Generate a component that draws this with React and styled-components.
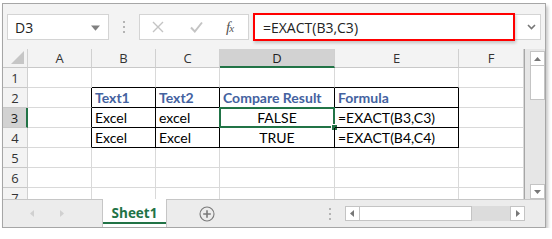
import React from "react";
import styled, { createGlobalStyle, css } from "styled-components";

const Global = createGlobalStyle`
  html, body { margin: 0; padding: 0; background: #fff; }
  body { font-family: "Open Sans", "Noto Sans", sans-serif; }
`;

const GREEN = "#217346";
const COLS = [
  { name: "", w: 25 },
  { name: "A", w: 64 },
  { name: "B", w: 64 },
  { name: "C", w: 64 },
  { name: "D", w: 115 },
  { name: "E", w: 124 },
  { name: "F", w: 65 },
];

const data = {
  2: { B: ["Text1", "head"], C: ["Text2", "head"], D: ["Compare Result", "head"], E: ["Formula", "head"] },
  3: { B: ["Excel"], C: ["excel"], D: ["FALSE", "center"], E: ["=EXACT(B3,C3)"] },
  4: { B: ["Excel"], C: ["Excel"], D: ["TRUE", "center"], E: ["=EXACT(B4,C4)"] },
};

const inBox = (r, c) => r >= 2 && r <= 4 && c >= 2 && c <= 5;

const Window = styled.div`
  margin: 3px 0 0 2px;
  width: 542px;
  height: 223px;
  border: 1px solid #a6a6a6;
  background: #f3f3f3;
  box-shadow: 2px 3px 3px rgba(0, 0, 0, 0.22);
  display: flex;
  flex-direction: column;
  overflow: hidden;
`;

const Toolbar = styled.div`
  height: 45px;
  display: flex;
  align-items: center;
  padding: 1px 4px 0 4px;
  box-sizing: border-box;
`;

const Field = styled.div`
  height: 26px;
  box-sizing: border-box;
  border: 1px solid #d4d4d4;
  background: #fff;
  display: flex;
  align-items: center;
  position: relative;
`;

const NameBox = styled(Field)`
  width: 102px;
  padding: 0 8px 0 7px;
  justify-content: space-between;
  font-size: 14px;
  color: #222;
`;

const FxBox = styled(Field)`
  width: 110px;
  margin-left: 14px;
  padding: 0 0 0 12px;
`;

const FormulaBox = styled(Field)`
  flex: 1;
  margin-left: 4px;
  padding-left: 9px;
  font-size: 14px;
  color: #222;
`;

const Highlight = styled.div`
  position: absolute;
  left: -1px;
  top: -2px;
  width: 262px;
  height: 28px;
  box-sizing: border-box;
  border: 2px solid #ff0000;
  box-shadow: 1px 2px 3px rgba(0, 0, 0, 0.2);
  pointer-events: none;
`;

const Dots = styled.div`
  width: 2px;
  display: flex;
  flex-direction: column;
  gap: 3px;
  margin: ${(p) => p.$m || "0 12px"};
  span {
    width: 2px;
    height: 2px;
    background: #b4b4b4;
  }
`;

const IconSlot = styled.div`
  width: ${(p) => p.$w || 38}px;
  display: flex;
  align-items: center;
  justify-content: ${(p) => p.$j || "flex-start"};
`;

const Fx = styled.span`
  font-family: "Liberation Serif", serif;
  font-style: italic;
  font-size: 15px;
  color: #555;
  letter-spacing: -1px;
  small { font-size: 11px; }
`;

const Body = styled.div`
  height: 150px;
  display: flex;
  background: #fff;
`;

const Sheet = styled.div`
  width: 521px;
  overflow: hidden;
  border-right: 1px solid #a6a6a6;
  display: grid;
  grid-template-columns: ${COLS.map((c) => c.w + "px").join(" ")};
  grid-template-rows: 19px repeat(7, 20px);
  font-family: "Lato", sans-serif;
  font-size: 14px;
`;

const Header = styled.div`
  box-sizing: border-box;
  background: ${(p) => (p.$sel ? "#d2d2d2" : "#f3f3f3")};
  border-right: 1px solid #d0d0d0;
  border-bottom: 1px solid #c8c8c8;
  font-family: "Open Sans", sans-serif;
  font-size: 13px;
  color: #333;
  display: flex;
  align-items: center;
  justify-content: center;
  position: relative;
  ${(p) =>
    p.$sel &&
    p.$col &&
    css`
      border-bottom: 2px solid ${GREEN};
      color: #222;
    `}
  ${(p) =>
    p.$sel &&
    p.$row &&
    css`
      border-right: 2px solid ${GREEN};
      color: #222;
    `}
`;

const Corner = styled(Header)`
  &::after {
    content: "";
    position: absolute;
    right: 3px;
    bottom: 3px;
    border-style: solid;
    border-width: 0 0 13px 13px;
    border-color: transparent transparent #c6c6c6 transparent;
  }
`;

const Cell = styled.div`
  box-sizing: border-box;
  border-right: 1px solid ${(p) => (p.$br ? "#000" : "#d9d9d9")};
  border-bottom: 1px solid ${(p) => (p.$bb ? "#000" : "#d9d9d9")};
  padding: 0 3px;
  display: flex;
  align-items: center;
  justify-content: ${(p) => (p.$kind === "center" ? "center" : "flex-start")};
  white-space: nowrap;
  color: ${(p) => (p.$kind === "head" ? "#44629f" : "#000")};
  font-weight: ${(p) => (p.$kind === "head" ? 700 : 400)};
  position: relative;
`;

const Selection = styled.div`
  position: absolute;
  left: -1px;
  top: -1px;
  right: -1px;
  bottom: -1px;
  border: 2px solid ${GREEN};
  &::after {
    content: "";
    position: absolute;
    right: -5px;
    bottom: -5px;
    width: 5px;
    height: 5px;
    background: ${GREEN};
    border: 1px solid #fff;
  }
`;

const VScroll = styled.div`
  flex: 1;
  background: #e6e6e6;
  display: flex;
  flex-direction: column;
  align-items: center;
  padding: 2px 0 0 4px;
  box-sizing: border-box;
`;

const ArrowBtn = styled.div`
  width: 15px;
  height: 15px;
  box-sizing: border-box;
  border: 1px solid #c4c4c4;
  background: #fff;
  display: flex;
  align-items: center;
  justify-content: center;
`;

const VThumb = styled.div`
  width: 15px;
  height: 34px;
  box-sizing: border-box;
  border: 1px solid #c4c4c4;
  border-top: none;
  background: #fff;
`;

const Spacer = styled.div`
  flex: 1;
`;

const TabBar = styled.div`
  flex: 1;
  display: flex;
  align-items: stretch;
  border-top: 1px solid #c6c6c6;
  background: #ececec;
`;

const NavArrows = styled.div`
  width: 99px;
  display: flex;
  align-items: center;
  padding-left: 26px;
  gap: 22px;
  box-sizing: border-box;
`;

const Tab = styled.div`
  width: 65px;
  margin-top: -1px;
  box-sizing: border-box;
  background: #fff;
  border-left: 1px solid #c6c6c6;
  border-right: 1px solid #c6c6c6;
  display: flex;
  align-items: center;
  justify-content: center;
  font-family: "Open Sans", sans-serif;
  font-weight: 700;
  font-size: 13.5px;
  color: ${GREEN};
  position: relative;
  &::after {
    content: "";
    position: absolute;
    left: 0;
    right: 0;
    bottom: 3px;
    height: 2px;
    background: ${GREEN};
  }
`;

const AddSheet = styled.div`
  width: 80px;
  display: flex;
  align-items: center;
  justify-content: center;
  padding-top: 1px;
`;

const HScroll = styled.div`
  display: flex;
  align-items: center;
  margin-left: auto;
  margin-right: 20px;
`;

const HTrack = styled.div`
  display: flex;
  width: 150px;
  height: 15px;
  background: #dcdcdc;
  box-sizing: border-box;
`;

const HThumb = styled.div`
  width: 112px;
  box-sizing: border-box;
  border: 1px solid #c4c4c4;
  border-left: none;
  background: #fff;
`;

const Tri = ({ dir, color = "#777", size = 7 }) => {
  const pts = {
    up: "0,6 3.5,2 7,6",
    down: "0,2 3.5,6 7,2",
    left: "5,0 1,3.5 5,7",
    right: "2,0 6,3.5 2,7",
  }[dir];
  return (
    <svg width={size} height={size} viewBox="0 0 7 7">
      <polygon points={pts} fill={color} />
    </svg>
  );
};

function DotCol({ m }) {
  return (
    <Dots $m={m}>
      <span />
      <span />
      <span />
    </Dots>
  );
}

export default function App() {
  const cells = [<Corner key="corner" />];
  COLS.slice(1).forEach((c) =>
    cells.push(
      <Header key={"h" + c.name} $sel={c.name === "D"} $col>
        {c.name}
      </Header>
    )
  );
  for (let r = 1; r <= 7; r++) {
    cells.push(
      <Header key={"r" + r} $sel={r === 3} $row>
        {r}
      </Header>
    );
    for (let c = 1; c < COLS.length; c++) {
      const name = COLS[c].name;
      const v = data[r] && data[r][name];
      const br = inBox(r, c) || inBox(r, c + 1);
      const bb = inBox(r, c) || inBox(r + 1, c);
      cells.push(
        <Cell key={r + name} $br={br} $bb={bb} $kind={v && v[1]}>
          {v && v[0]}
          {r === 3 && name === "D" && <Selection />}
        </Cell>
      );
    }
  }

  return (
    <>
      <Global />
      <Window>
        <Toolbar>
          <NameBox>
            D3
            <Tri dir="down" color="#808080" size={9} />
          </NameBox>
          <DotCol m="0 0 0 14px" />
          <FxBox>
            <IconSlot $w={38}>
              <svg width="12" height="12" viewBox="0 0 12 12">
                <path d="M1 1 L11 11 M11 1 L1 11" stroke="#c4c4c4" strokeWidth="1.4" fill="none" />
              </svg>
            </IconSlot>
            <IconSlot $w={36}>
              <svg width="13" height="12" viewBox="0 0 13 12">
                <path d="M1 6.5 L4.8 10.5 L12 1.5" stroke="#c4c4c4" strokeWidth="2" fill="none" />
              </svg>
            </IconSlot>
            <Fx>
              f<small>x</small>
            </Fx>
          </FxBox>
          <FormulaBox>
            =EXACT(B3,C3)
            <Highlight />
            <Spacer />
            <IconSlot $w={18} $j="center">
              <svg width="9" height="6" viewBox="0 0 9 6">
                <path d="M1 1 L4.5 4.5 L8 1" stroke="#777" strokeWidth="1.6" fill="none" />
              </svg>
            </IconSlot>
          </FormulaBox>
        </Toolbar>
        <Body>
          <Sheet>{cells}</Sheet>
          <VScroll>
            <ArrowBtn>
              <Tri dir="up" />
            </ArrowBtn>
            <VThumb />
            <Spacer />
            <ArrowBtn>
              <Tri dir="down" />
            </ArrowBtn>
          </VScroll>
        </Body>
        <TabBar>
          <NavArrows>
            <Tri dir="left" color="#d0d0d0" />
            <Tri dir="right" color="#d0d0d0" />
          </NavArrows>
          <Tab>Sheet1</Tab>
          <AddSheet>
            <svg width="16" height="16" viewBox="0 0 16 16">
              <circle cx="8" cy="8" r="7" stroke="#7a7a7a" strokeWidth="1.1" fill="none" />
              <path d="M8 4.2 V11.8 M4.2 8 H11.8" stroke="#7a7a7a" strokeWidth="1.6" />
            </svg>
          </AddSheet>
          <HScroll>
            <DotCol m="0 14px 0 0" />
            <ArrowBtn>
              <Tri dir="left" />
            </ArrowBtn>
            <HTrack>
              <HThumb />
            </HTrack>
            <ArrowBtn>
              <Tri dir="right" />
            </ArrowBtn>
          </HScroll>
        </TabBar>
      </Window>
    </>
  );
}
